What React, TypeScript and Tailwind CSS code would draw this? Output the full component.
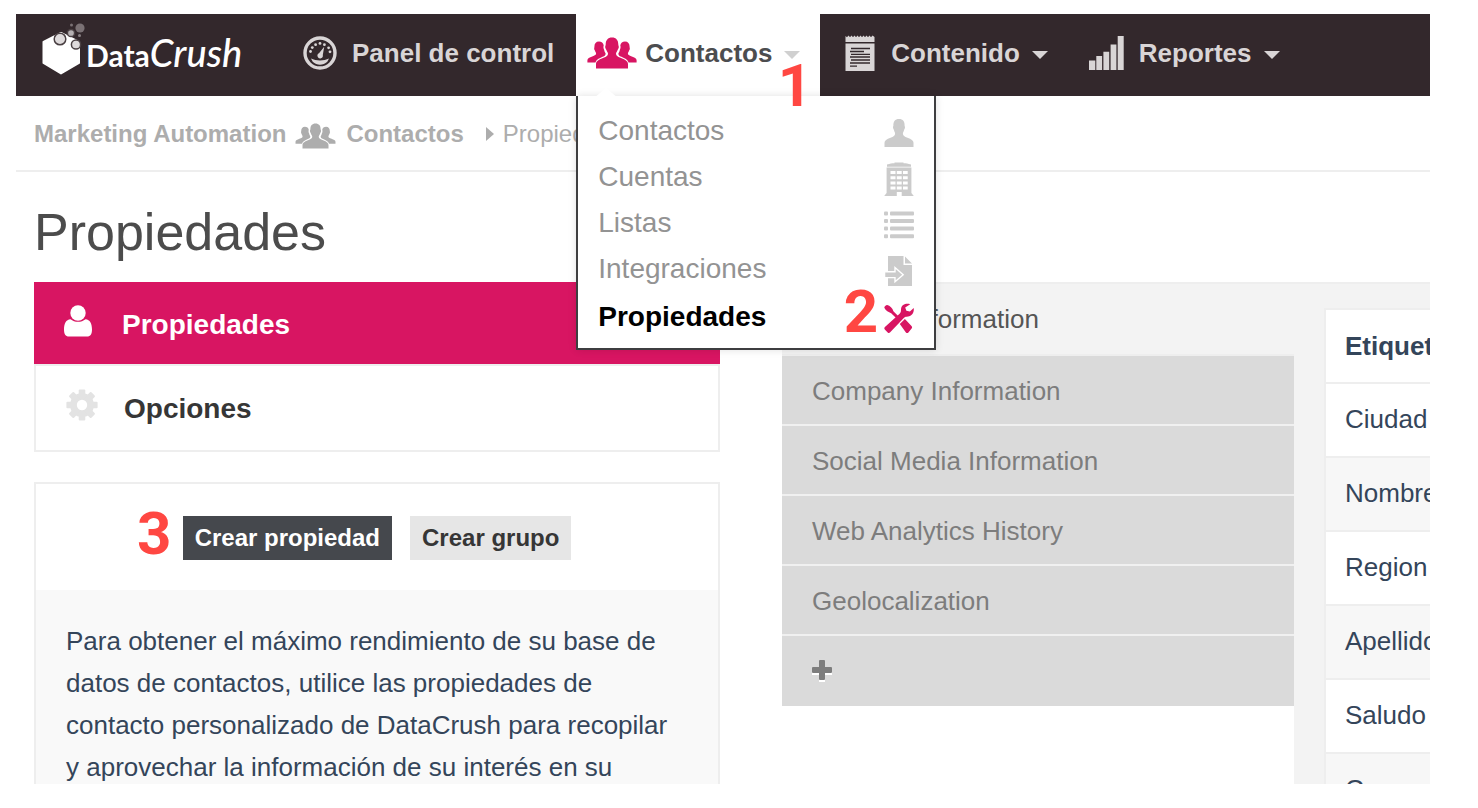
import React, { useState } from 'react';

interface IconProps {
  className?: string;
}

interface MenuEntry {
  label: string;
  icon: React.FC<IconProps>;
}

const GaugeIcon: React.FC<IconProps> = ({ className }) => (
  <svg viewBox="0 0 34 34" className={className} aria-hidden="true">
    <circle cx="17" cy="17" r="15" fill="none" stroke="currentColor" strokeWidth="3.4" />
    <g fill="currentColor">
      <circle cx="7.5" cy="15.5" r="1.4" />
      <circle cx="9.3" cy="11.6" r="1.4" />
      <circle cx="12.6" cy="8.7" r="1.4" />
      <circle cx="17" cy="7.4" r="1.4" />
      <circle cx="21.4" cy="8.7" r="1.4" />
      <circle cx="25.6" cy="11.8" r="1.4" />
      <circle cx="27" cy="15.8" r="1.4" />
      <path d="M21.2 10.8 19.8 19a2.7 2.7 0 1 1-3.8-1.8z" />
      <path d="M8 22.600c5 2.600 13 2.600 18 0l-1.700 3.200c-4.100 3.800-10.500 3.800-14.600 0z" />
    </g>
  </svg>
);

const GroupIcon: React.FC<IconProps> = ({ className }) => (
  <svg viewBox="0 0 50 32" className={className} fill="currentColor" aria-hidden="true">
    <path d="M25 .5c4.200 0 6.300 2.700 6.300 7 0 1.200.6 1.400.5 2.700-.1 1.400-.9 1.700-1.200 2.900-.4 1.500-1.600 2.600-1.600 3.500 0 2.400 1.500 3 4.500 4.200C38 22.600 41 24 41 27v4.500H9V27c0-3 3-4.400 7.500-6.200 3-1.200 4.500-1.800 4.500-4.200 0-.9-1.200-2-1.600-3.500-.3-1.200-1.100-1.500-1.200-2.900-.1-1.300.5-1.500.5-2.700 0-4.300 2.100-7 6.300-7z" />
    <path d="M12 4.500c2.500 0 4.300 1.400 4.700 3.800-.5 2-.3 3.200.5 4.600.3 1.600.6 2.200 1.400 3.300.1 2-.8 2.600-3 3.600-3.600 1.600-6.100 2.800-7.200 5.700H.4v-2.300c0-1.800 2.200-2.600 4.800-3.700 2.700-1.100 3.900-1.600 3.900-3 0-.9-.8-1.600-1.200-3-.5-.8-.8-1.300-.7-2.300.1-.6.200-.9.200-1.500 0-3.200 1.600-5.200 4.600-5.200z" />
    <path d="M38 4.500c-2.500 0-4.300 1.400-4.700 3.800.5 2 .3 3.200-.5 4.600-.3 1.600-.6 2.200-1.400 3.300-.1 2 .8 2.600 3 3.600 3.600 1.600 6.100 2.800 7.200 5.700h8v-2.300c0-1.800-2.200-2.600-4.800-3.700-2.700-1.100-3.900-1.600-3.900-3 0-.9.8-1.600 1.200-3 .5-.8.8-1.300.7-2.300-.1-.6-.2-.9-.2-1.500 0-3.200-1.600-5.200-4.600-5.200z" />
  </svg>
);

const NotepadIcon: React.FC<IconProps> = ({ className }) => (
  <svg viewBox="0 0 30 36" className={className} aria-hidden="true">
    <path
      fill="currentColor"
      d="M.5 7V1l1.500 1.200L3.500.6 5 2.200 6.500.6 8 2.200 9.500.6 11 2.200 12.500.6 14 2.200 15.500.6 17 2.200 18.500.6 20 2.200 21.500.6 23 2.200 24.500.6 26 2.200 27.500.6 29.500 2v5zM.5 8.500h29V36H.5z"
    />
    <path
      stroke="#33282c"
      strokeWidth="1.300"
      d="M6 13.500h19M5 16.500h14M6 19.300h19M5 22h20M6 25h19M5 28h20M5 31.200h7"
    />
  </svg>
);

const BarsIcon: React.FC<IconProps> = ({ className }) => (
  <svg viewBox="0 0 35 34" className={className} fill="currentColor" aria-hidden="true">
    <path d="M0 24.500h6.300V34H0zM7.300 20h5.800v14H7.300zM14.400 15.700h5.800V34h-5.800zM21.600 8.500h5.800V34h-5.800zM28.700 0h6v34h-6z" />
  </svg>
);

const PersonIcon: React.FC<IconProps> = ({ className }) => (
  <svg viewBox="0 0 30 30" className={className} fill="currentColor" aria-hidden="true">
    <path d="M15 1c4 0 5.800 2.600 5.600 6.600 0 .7.500 1 .4 2-.1 1.400-.8 1.600-1 2.600-.3 1.300-1.100 2.200-1.100 3.400 0 2.500 1.600 3 4.600 4.200 3.800 1.500 6 2.500 6 5V29H.5v-4.200c0-2.500 2.200-3.500 6-5 3-1.200 4.600-1.700 4.600-4.200 0-1.200-.8-2.100-1.100-3.400-.2-1-.9-1.200-1-2.600-.1-1 .4-1.300.4-2C9.200 3.600 11 1 15 1z" />
  </svg>
);

const BuildingIcon: React.FC<IconProps> = ({ className }) => (
  <svg viewBox="0 0 30 34" className={className} aria-hidden="true">
    <path
      fill="currentColor"
      d="M3 2.500c3-1 5-1.200 7.500-1.300V.4h9v.8c2.500.1 4.500.3 7.500 1.300v2.200H3zM2.600 5.600h24.800V31l2.400 3H.2l2.400-3z"
    />
    <path
      fill="#fff"
      d="M6.500 9h5v3h-5zm6.300 0h4.900v3h-4.900zM19 9h4.700v3H19zM6.500 14.200h5v3h-5zm6.300 0h4.900v3h-4.900zm6.200 0h4.700v3H19zM6.500 19.400h5v3h-5zm6.300 0h4.900v3h-4.900zm6.200 0h4.700v3H19zM6.500 24.500h5v3h-5zm6.300 0h4.900v3h-4.900zm6.200 0h4.700v3H19zM12.800 30h4.900v4h-4.900z"
    />
  </svg>
);

const ListIcon: React.FC<IconProps> = ({ className }) => (
  <svg viewBox="0 0 30 28" className={className} fill="currentColor" aria-hidden="true">
    {[0.5, 8, 15.6, 23.3].map(y => (
      <g key={y}>
        <rect x="0" y={y} width="4" height="4" rx="1" />
        <rect x="6" y={y} width="24" height="4" rx="1" />
      </g>
    ))}
  </svg>
);

const ImportIcon: React.FC<IconProps> = ({ className }) => (
  <svg viewBox="0 0 30 30" className={className} aria-hidden="true">
    <path fill="currentColor" d="M4 0h15.500v9H28v21H4zM21 .4 28 7.600h-7z" />
    <path
      fill="currentColor"
      stroke="#fff"
      strokeWidth="1.400"
      d="M.4 15.800H11v-4.300l8.200 7.200-8.200 7.100v-4.200H.4z"
    />
    <path fill="#fff" d="M0 14h1.200v9H0z" />
  </svg>
);

const ToolsIcon: React.FC<IconProps> = ({ className }) => (
  <svg viewBox="0 0 30 30" className={className} fill="currentColor" aria-hidden="true">
    <path d="M.3 3.800C.4 2.300 1.700 1.200 3.200 1c2.700.8 5.400 3 6.200 6.200l7 7.100-2 2-7.200-7C4.600 8.200 1.700 6.800.3 3.800z" />
    <path d="m15.800 20 5.100-5 6.600 7.100c.8.800.8 1.800.1 2.500l-3.200 3.900c-.8.700-1.700.7-2.500-.1z" />
    <path d="M26.200.2C22.700-1 17.200 0 17 5.500c0 2-.2 3-1.400 4.200L.9 23c-.8.800-.8 1.700-.1 2.400l2.900 3c.8.800 1.700.7 2.500-.1l13.600-14.200c1.300-1.300 2.400-1.300 4.200-1.500 4-.5 6.400-4 5.700-8.500l-3.800 3.500-3.500-.9-1.200-3.200z" />
  </svg>
);

const UserIcon: React.FC<IconProps> = ({ className }) => (
  <svg viewBox="0 0 28 32" className={className} fill="currentColor" aria-hidden="true">
    <circle cx="14" cy="8" r="7.700" />
    <path d="M6.500 14.300c4 3.400 11 3.400 15 0 4.500.2 6.500 4.500 6.500 10.200 0 4.500-1.500 7-5 7H5c-3.500 0-5-2.500-5-7 0-5.700 2-10 6.500-10.200z" />
  </svg>
);

const GearIcon: React.FC<IconProps> = ({ className }) => (
  <svg viewBox="0 0 32 32" className={className} aria-hidden="true">
    <g fill="currentColor">
      <circle cx="16" cy="16" r="12" />
      {[0, 45, 90, 135].map(angle => (
        <rect key={angle} x="12.700" y="0.400" width="6.600" height="31.200" rx="1" transform={`rotate(${angle} 16 16)`} />
      ))}
    </g>
    <circle cx="16" cy="16" r="5.200" fill="#fff" />
  </svg>
);

const Caret: React.FC<IconProps> = ({ className }) => (
  <svg viewBox="0 0 16 8" className={`mt-1 h-2 w-4 shrink-0 ${className ?? ''}`} fill="currentColor" aria-hidden="true">
    <path d="M0 0h16L8 8z" />
  </svg>
);

const Logo: React.FC = () => (
  <a href="#" className="flex w-[263px] shrink-0 items-center pl-[26px] text-white" aria-label="DataCrush">
    <svg viewBox="0 0 44 54" className="mb-3 h-[54px] w-11 shrink-0" aria-hidden="true">
      <path
        fill="currentColor"
        stroke="currentColor"
        strokeWidth="2"
        strokeLinejoin="round"
        d="M1.500 20 19 11 37 20v21L19 51.500 1.500 41z"
      />
      <g stroke="#4a4043" strokeWidth="1.500">
        <circle cx="18" cy="17" r="5.800" fill="#dedadb" />
        <circle cx="34" cy="22.500" r="4.600" fill="#dedadb" />
        <circle cx="29" cy="11" r="3.600" fill="#b5b0b2" />
      </g>
      <circle cx="38" cy="6" r="4.600" fill="#7a7174" />
      <circle cx="29.500" cy="3" r="1.500" fill="#7a7174" />
      <circle cx="37.500" cy="13.500" r="1.500" fill="#8a8285" />
    </svg>
    <span className="flex items-baseline pb-1 font-[Lato]">
      <span className="text-[30px] leading-10 font-bold">Data</span>
      <span className="text-[38px] leading-10 font-medium italic">Crush</span>
    </span>
  </a>
);

const contactMenu: MenuEntry[] = [
  { label: 'Contactos', icon: PersonIcon },
  { label: 'Cuentas', icon: BuildingIcon },
  { label: 'Listas', icon: ListIcon },
  { label: 'Integraciones', icon: ImportIcon },
  { label: 'Propiedades', icon: ToolsIcon }
];

const groups = [
  'Contact Information',
  'Company Information',
  'Social Media Information',
  'Web Analytics History',
  'Geolocalization'
];

const fields = ['Ciudad', 'Nombre', 'Region', 'Apellidos', 'Saludo', 'Cargo'];

const Step: React.FC<{ value: number; className: string }> = ({ value, className }) => (
  <span className={`pointer-events-none absolute font-[Roboto] text-[60px] leading-none font-bold text-[#ff4742] ${className}`}>
    {value}
  </span>
);

const ContactsDropdown: React.FC = () => (
  <div className="absolute top-full left-0 z-10 w-[360px] border-2 border-t-0 border-[#3e3e40] bg-white pt-3 pb-[6px] shadow-[0_0_8px_rgba(0,0,0,0.12)]">
    <svg viewBox="0 0 24 10" className="absolute -top-2 left-4 h-[10px] w-6 text-white" fill="currentColor" aria-hidden="true">
      <path d="M0 10 12 0l12 10z" />
    </svg>
    <ul>
      {contactMenu.map(({ label, icon: Icon }) => {
        const active = label === 'Propiedades';
        return (
          <li key={label}>
            <a
              href="#"
              className={`relative flex items-center justify-between px-5 text-[28px] ${
                active ? 'h-[50px] font-bold text-black' : 'h-[46px] font-normal text-[#939393]'
              }`}
            >
              {label}
              {active && <Step value={2} className="right-14 bottom-0" />}
              <Icon className={`mt-1 h-[34px] w-[30px] shrink-0 ${active ? 'text-[#d81562]' : 'text-[#cbcbcb]'}`} />
            </a>
          </li>
        );
      })}
    </ul>
  </div>
);

const NavBar: React.FC = () => {
  const [open, setOpen] = useState(true);

  return (
    <nav className="flex h-[82px] shrink-0 bg-[#33282c] text-[26px] font-bold whitespace-nowrap text-[#d9d5d6]">
      <Logo />
      <a href="#" className="flex items-center gap-[15px] pr-[22px] pb-1 pl-6">
        <GaugeIcon className="h-[34px] w-[34px] shrink-0" />
        Panel de control
      </a>
      <div className="relative w-[244px] shrink-0 bg-white">
        <button
          onClick={() => setOpen(!open)}
          aria-expanded={open}
          className="flex h-full w-full items-center pb-1 pl-[11px] text-[#4c4d4f]"
        >
          <GroupIcon className="mr-2 h-8 w-[50px] shrink-0 text-[#d81562]" />
          Contactos
          <Caret className="ml-3 text-[#d0d0d0]" />
        </button>
        {open && <ContactsDropdown />}
        <Step value={1} className="right-2 -bottom-5 z-20" />
      </div>
      <button className="flex items-center pr-4 pb-1 pl-[25px]">
        <NotepadIcon className="mr-4 h-9 w-[30px] shrink-0" />
        Contenido
        <Caret className="ml-3" />
      </button>
      <button className="flex items-center pr-4 pb-1 pl-[25px]">
        <BarsIcon className="mr-[15px] h-[34px] w-[35px] shrink-0" />
        Reportes
        <Caret className="ml-3" />
      </button>
    </nav>
  );
};

const Breadcrumb: React.FC = () => (
  <div className="flex h-[76px] shrink-0 items-center border-b-2 border-[#eeeeee] pt-[2px] pl-[18px] text-2xl font-bold whitespace-nowrap text-[#adadad]">
    <a href="#">Marketing Automation</a>
    <a href="#" className="ml-[9px] flex items-center gap-[10px]">
      <GroupIcon className="mt-1 h-[26px] w-[41px]" />
      Contactos
    </a>
    <svg viewBox="0 0 8 14" className="mr-[9px] ml-[22px] h-[14px] w-2" fill="currentColor" aria-hidden="true">
      <path d="M0 0l8 7-8 7z" />
    </svg>
    <span className="font-normal">Propiedades</span>
  </div>
);

const Sidebar: React.FC = () => (
  <aside className="flex min-h-0 flex-col">
    <a href="#" className="flex h-[82px] shrink-0 items-center bg-[#d81562] pt-1 pl-[30px] text-[28px] font-bold text-white">
      <UserIcon className="mr-[30px] mb-2 h-8 w-7" />
      Propiedades
    </a>
    <a href="#" className="flex h-[88px] shrink-0 items-center border-2 border-[#eeeeee] pt-[2px] pl-[30px] text-[28px] font-bold text-[#363636]">
      <GearIcon className="mr-[26px] mb-2 h-8 w-8 text-[#e3e3e3]" />
      Opciones
    </a>

    <div className="mt-[30px] flex min-h-0 flex-1 flex-col border-2 border-b-0 border-[#eeeeee]">
      <div className="relative flex shrink-0 justify-center gap-[18px] pt-8 pb-[30px]">
        <Step value={3} className="top-5 left-[101px]" />
        <button className="h-11 bg-[#45484d] px-3 text-2xl leading-none font-bold text-white">Crear propiedad</button>
        <button className="h-11 bg-[#e6e6e6] px-3 text-2xl leading-none font-bold text-[#363636]">Crear grupo</button>
      </div>
      <p className="flex-1 bg-[#f9f9f9] py-[30px] pr-10 pl-[30px] text-[26px] leading-[42px] text-[#34455a]">
        Para obtener el máximo rendimiento de su base de datos de contactos, utilice las propiedades de contacto
        personalizado de DataCrush para recopilar y aprovechar la información de su interés en su
      </p>
    </div>
  </aside>
);

const PropertyPanel: React.FC = () => {
  const [selected, setSelected] = useState(groups[0]);

  return (
    <section className="grid min-h-0 grid-cols-[minmax(0,512fr)_minmax(0,136fr)] text-[26px]">
      <ul>
        {groups.map(group => (
          <li key={group}>
            <button
              onClick={() => setSelected(group)}
              className={`block w-full truncate border-b-2 pl-[30px] text-left ${
                group === selected
                  ? 'h-[74px] border-t-2 border-t-[#eeeeee] border-b-[#eeeeee] bg-[#f3f3f3] text-[#555555]'
                  : 'h-[70px] border-b-[#f0f0f0] bg-[#dadada] pt-[2px] text-[#7d7d7d]'
              }`}
            >
              {group}
            </button>
          </li>
        ))}
        <li>
          <button className="flex h-[70px] w-full items-center bg-[#dadada] pl-[29px] text-[#7d7d7d]" aria-label="Agregar grupo">
            <svg viewBox="0 0 22 24" className="h-6 w-[22px]" aria-hidden="true">
              <path fill="#fff" d="M8 3h6v7h7v6h-7v7H8v-7H1v-6h7z" />
              <path fill="currentColor" d="M9 1h4q1 0 1 1v6h6q1 0 1 1v4q0 1-1 1h-6v6q0 1-1 1H9q-1 0-1-1v-6H2q-1 0-1-1V9q0-1 1-1h6V2q0-1 1-1z" />
            </svg>
          </button>
        </li>
      </ul>

      <div className="min-h-0 overflow-hidden border-t-2 border-[#eeeeee] bg-[#f3f3f3] pt-6 pl-[30px]">
        <table className="w-[640px] border-separate border-spacing-0 border-2 border-[#eeeeee] bg-white text-left text-[#34455a]">
          <thead>
            <tr>
              <th className="h-[74px] border-b-2 border-[#eeeeee] px-[19px] font-bold">Etiqueta</th>
            </tr>
          </thead>
          <tbody>
            {fields.map(field => (
              <tr key={field} className="even:bg-[#f7f7f7]">
                <td className="h-[74px] border-b-2 border-[#eeeeee] px-[19px] pb-[2px]">{field}</td>
              </tr>
            ))}
          </tbody>
        </table>
      </div>
    </section>
  );
};

const App: React.FC = () => {
  return (
    <div className="h-screen bg-white pt-[14px] pr-12 pb-6 pl-4 font-['Liberation_Sans',Arial,sans-serif]">
      <div className="flex h-full flex-col overflow-hidden">
        <NavBar />
        <Breadcrumb />
        <h1 className="shrink-0 pt-[30px] pb-5 pl-[18px] text-[52px] leading-[60px] text-[#4c4c4c]">Propiedades</h1>
        <main className="grid min-h-0 flex-1 grid-cols-[minmax(0,686fr)_minmax(0,648fr)] grid-rows-[minmax(0,1fr)] gap-x-[62px] pl-[18px]">
          <Sidebar />
          <PropertyPanel />
        </main>
      </div>
    </div>
  );
};

export default App;
